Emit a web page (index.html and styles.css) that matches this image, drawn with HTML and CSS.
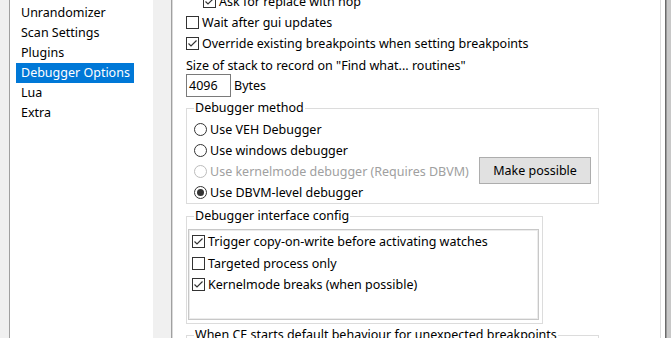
FILE: index.html
```html
<!DOCTYPE html>
<html>
<head>
<meta charset="utf-8">
<link rel="stylesheet" href="styles.css">
</head>
<body>
<div class="window">
  <div class="left">
    <ul class="tree">
      <li>Unrandomizer</li>
      <li>Scan Settings</li>
      <li>Plugins</li>
      <li class="sel">Debugger Options</li>
      <li>Lua</li>
      <li>Extra</li>
    </ul>
  </div>
  <div class="gap"></div>
  <div class="content">
    <div class="opts">
      <div class="row sub"><span class="cb"><svg viewBox="0 0 11 11"><polyline points="1.5,5.5 4,8 9.5,2.5"/></svg></span>Ask for replace with nop</div>
      <div class="row"><span class="cb"></span>Wait after gui updates</div>
      <div class="row"><span class="cb"><svg viewBox="0 0 11 11"><polyline points="1.5,5.5 4,8 9.5,2.5"/></svg></span>Override existing breakpoints when setting breakpoints</div>
      <div class="label">Size of stack to record on "Find what... routines"</div>
      <div class="stack"><span class="edit">4096</span><span class="unit">Bytes</span></div>
    </div>
    <fieldset class="grp g1">
      <legend>Debugger method</legend>
      <div class="radios">
        <div class="row"><span class="rd"></span>Use VEH Debugger</div>
        <div class="row"><span class="rd"></span>Use windows debugger</div>
        <div class="row dis"><span class="rd"></span>Use kernelmode debugger (Requires DBVM)<button class="btn">Make possible</button></div>
        <div class="row"><span class="rd on"><span class="dot"></span></span>Use DBVM-level debugger</div>
      </div>
    </fieldset>
    <fieldset class="grp g2">
      <legend>Debugger interface config</legend>
      <div class="clb">
        <div class="item"><span class="cb"><svg viewBox="0 0 11 11"><polyline points="1.5,5.5 4,8 9.5,2.5"/></svg></span>Trigger copy-on-write before activating watches</div>
        <div class="item"><span class="cb"></span>Targeted process only</div>
        <div class="item"><span class="cb"><svg viewBox="0 0 11 11"><polyline points="1.5,5.5 4,8 9.5,2.5"/></svg></span>Kernelmode breaks (when possible)</div>
      </div>
    </fieldset>
    <fieldset class="grp g3">
      <legend>When CE starts default behaviour for unexpected breakpoints</legend>
      <div class="g3body"></div>
    </fieldset>
  </div>
  <div class="rstrip"></div>
</div>
</body>
</html>
```
FILE: styles.css
```css
html, body {
  margin: 0;
  padding: 0;
}
body {
  background: #f0f0f0;
  font: 12.5px "Noto Sans", "Liberation Sans", sans-serif;
  color: #000;
  width: 671px;
  height: 338px;
  overflow: hidden;
}
.window {
  display: flex;
  height: 338px;
}
.left {
  width: 153px;
  padding-left: 9px;
  box-sizing: border-box;
  flex: none;
}
.tree {
  height: 100%;
  margin: 0;
  padding: 3px 0 0 6px;
  list-style: none;
  background: #fff;
  border-left: 1px solid #a0a0a0;
  box-sizing: border-box;
}
.tree li {
  height: 20px;
  line-height: 20px;
  padding: 0 4px 0 5px;
  width: fit-content;
}
.tree li.sel {
  background: #0078d7;
  color: #fff;
}
.gap {
  width: 18px;
  flex: none;
}
.content {
  width: 490px;
  flex: none;
  box-sizing: border-box;
  background: #fff;
  border-left: 1px solid #a0a0a0;
  border-right: 1px solid #dcdcdc;
  box-shadow: inset 1px 0 0 #dadada;
  padding-left: 14px;
  overflow: hidden;
}
.rstrip {
  width: 10px;
  flex: none;
  background: linear-gradient(to right, #fff 0 4px, #6b6b6b 4px 5px, #9a9a9a 5px 6px, #c8c8c8 6px);
}
.opts {
  margin-top: -9px;
}
.row {
  display: flex;
  align-items: center;
  height: 21px;
  white-space: nowrap;
}
.row.sub {
  padding-left: 17px;
}
.cb {
  width: 13px;
  height: 13px;
  box-sizing: border-box;
  border: 1px solid #333;
  background: #fff;
  margin-right: 3px;
  flex: none;
  display: flex;
}
.cb svg {
  width: 11px;
  height: 11px;
}
.cb polyline {
  fill: none;
  stroke: #333;
  stroke-width: 1.2;
}
.label {
  height: 16px;
  line-height: 16px;
  margin-top: 4px;
  white-space: nowrap;
}
.stack {
  display: flex;
  align-items: center;
  height: 23px;
}
.edit {
  width: 45px;
  height: 23px;
  box-sizing: border-box;
  border: 1px solid #7a7a7a;
  padding-left: 2px;
  line-height: 21px;
}
.unit {
  margin-left: 3px;
}
.grp {
  margin: 3px 0 0 0;
  padding: 0;
  border: 1px solid #dcdcdc;
  box-sizing: border-box;
  min-width: 0;
}
.grp legend {
  margin-left: 7px;
  padding: 0 1px;
  line-height: 16px;
  white-space: nowrap;
}
.g1 {
  width: 413px;
}
.radios {
  padding: 3px 7px 0 7px;
}
.rd {
  width: 13px;
  height: 13px;
  box-sizing: border-box;
  border: 1px solid #333;
  border-radius: 50%;
  background: #fff;
  margin-right: 3px;
  flex: none;
  display: flex;
  align-items: center;
  justify-content: center;
}
.rd .dot {
  width: 7px;
  height: 7px;
  border-radius: 50%;
  background: #333;
}
.dis {
  color: #a0a0a0;
}
.dis .rd {
  border-color: #bcbcbc;
}
.btn {
  margin-left: auto;
  margin-bottom: 2px;
  width: 112px;
  height: 27px;
  flex: none;
  box-sizing: border-box;
  border: 1px solid #adadad;
  background: #e1e1e1;
  font: 12.5px "Noto Sans", "Liberation Sans", sans-serif;
  color: #000;
  padding: 0;
}
.g2 {
  width: 357px;
  margin-top: 4px;
}
.clb {
  margin: 5px 3px 3px 1px;
  height: 91px;
  box-sizing: border-box;
  border: 1px solid #c8c8c8;
  box-shadow: inset 0 0 0 1px #ececec;
  padding: 1px 0 0 3px;
}
.item {
  display: flex;
  align-items: center;
  height: 21.5px;
  white-space: nowrap;
}
.g3 {
  width: 413px;
  margin-top: 3px;
}
.g3body {
  height: 60px;
}
```
